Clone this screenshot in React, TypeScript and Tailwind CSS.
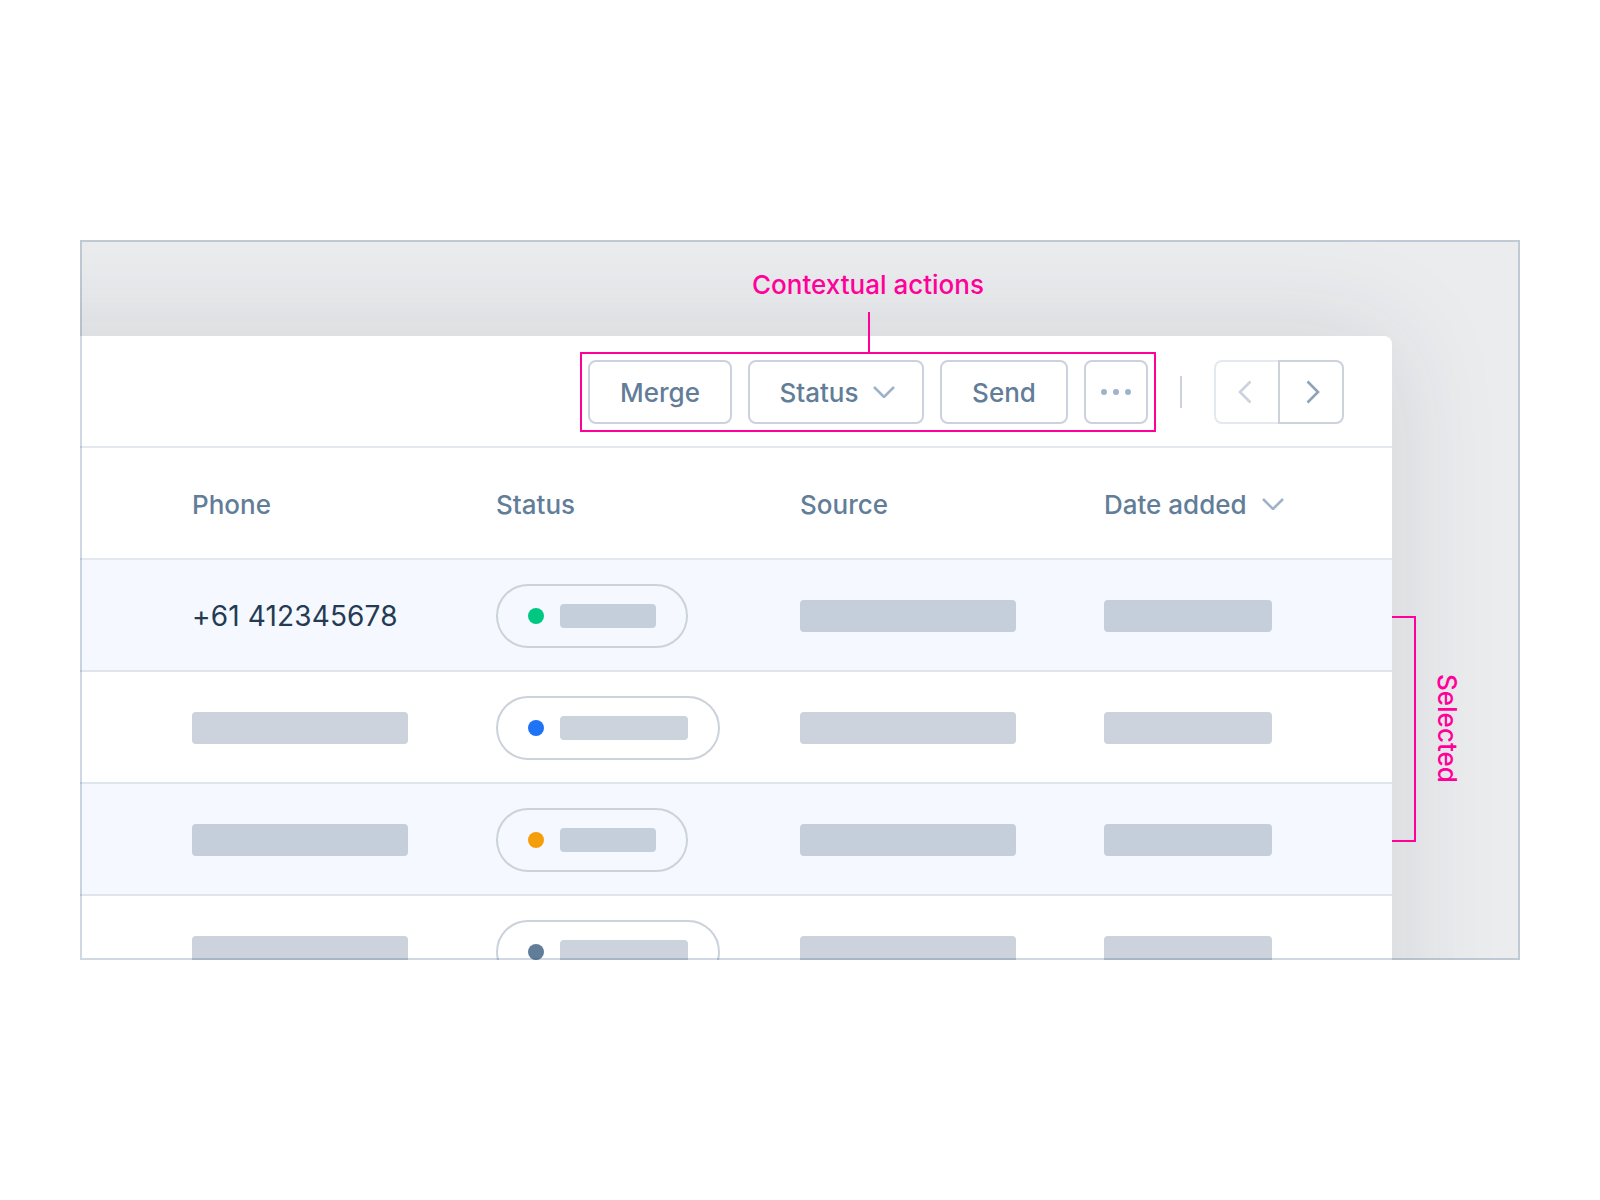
const Chevron = ({ className }: { className?: string }) => (
  <svg width="22" height="12" viewBox="0 0 22 12" fill="none" className={className}>
    <path d="M1 1l10 10L21 1" stroke="#9fb3c8" strokeWidth="2.6" />
  </svg>
);

const Button = ({ children, className }: { children: React.ReactNode; className?: string }) => (
  <button className={`h-16 flex items-center justify-center rounded-lg border-2 border-[#cbd2dc] bg-white text-[26px] font-[450] text-[#627d98] ${className}`}>
    {children}
  </button>
);

const Bar = ({ width, selected, className }: { width: string; selected?: boolean; className?: string }) => (
  <div className={`${width} rounded ${selected ? "bg-[#c5cfdb]" : "bg-[#ccd3dc]"} ${className ?? "h-8"}`} />
);

const rows = [
  { selected: true, dot: "bg-[#00c781]", phone: "+61 412345678", wide: false },
  { selected: false, dot: "bg-[#1f73f5]", wide: true },
  { selected: true, dot: "bg-[#f59e0b]", wide: false },
  { selected: false, dot: "bg-[#627d98]", wide: true },
];

export default function App() {
  return (
    <div className="min-h-[1200px] bg-white px-20 pt-60 font-['Inter',sans-serif]">
      <div className="relative h-[720px] w-[1440px] overflow-hidden bg-[#ebecee]">
        {/* card runs past the frame on the left and bottom so its shadow stays even */}
        <div className="-ml-40 mt-24 h-[900px] w-[1472px] rounded-tr-lg bg-white pl-40 shadow-[0_0_110px_rgba(30,40,60,0.13)]">
          <div className="-ml-40 flex h-28 items-center justify-end border-b-2 border-[#e4e9ef] pr-12 pt-0.5">
            <div className="flex gap-4">
              <Button className="w-36">Merge</Button>
              <Button className="w-44 gap-[14px] pl-0.5">
                Status
                <Chevron />
              </Button>
              <Button className="w-32">Send</Button>
              <Button className="w-16 gap-1.5">
                <span className="size-1.5 rounded-full bg-[#9fb3c8]" />
                <span className="size-1.5 rounded-full bg-[#9fb3c8]" />
                <span className="size-1.5 rounded-full bg-[#9fb3c8]" />
              </Button>
            </div>
            <div className="mx-8 h-8 w-0.5 bg-[#cbd2dc]" />
            <div className="flex">
              <button className="flex h-16 w-16 items-center justify-center rounded-l-lg border-2 border-r-0 border-[#e4e9ef] pr-1">
                <svg width="14" height="24" viewBox="0 0 14 24" fill="none">
                  <path d="M12.5 1.5L2 12l10.5 10.5" stroke="#cbd2dc" strokeWidth="2.6" />
                </svg>
              </button>
              <button className="flex h-16 w-[66px] items-center justify-center rounded-r-lg border-2 border-[#cbd2dc] pl-1">
                <svg width="14" height="24" viewBox="0 0 14 24" fill="none">
                  <path d="M1.5 1.5L12 12 1.5 22.5" stroke="#8ea2b8" strokeWidth="2.6" />
                </svg>
              </button>
            </div>
          </div>

          <div className="grid h-28 grid-cols-[304px_304px_304px_1fr] items-center border-b-2 border-[#e4e9ef] pl-28 pt-0.5 text-[26px] font-[450] text-[#627d98]">
            <div>Phone</div>
            <div>Status</div>
            <div>Source</div>
            <div className="flex items-center gap-[15px]">
              Date added
              <Chevron />
            </div>
          </div>

          {rows.map((row, i) => (
            <div
              key={i}
              className={`grid h-28 grid-cols-[304px_304px_304px_1fr] items-center border-b-2 border-[#dfe5ee] pl-28 pt-0.5 ${row.selected ? "bg-[#f5f9ff]" : "bg-white"}`}
            >
              {row.phone ? (
                <div className="text-[28px] tracking-[0.15px] text-[#243b53]">{row.phone}</div>
              ) : (
                <Bar width="w-[216px]" selected={row.selected} />
              )}
              <div className="flex">
                <div className="flex h-16 items-center gap-4 rounded-full border-2 border-[#cbd2dc] px-[30px]">
                  <span className={`size-4 rounded-full ${row.dot}`} />
                  <Bar width={row.wide ? "w-32" : "w-24"} selected={row.selected} className="h-6" />
                </div>
              </div>
              <Bar width="w-[216px]" selected={row.selected} />
              <Bar width="w-[168px]" selected={row.selected} />
            </div>
          ))}
        </div>

        {/* annotations */}
        <div className="absolute left-[500px] top-[112px] h-20 w-[576px] border-2 border-[#ff0099]" />
        <div className="absolute left-[788px] top-[72px] h-10 w-0.5 bg-[#ff0099]" />
        <div className="absolute left-[658px] top-[29px] w-[260px] text-center text-[26px] font-[450] leading-8 text-[#ff0099]">
          Contextual actions
        </div>
        <div className="absolute left-[1312px] top-[376px] h-[226px] w-6 border-y-2 border-r-2 border-[#ff0099]" />
        <div className="absolute left-[1351px] top-[434px] text-[26px] font-[450] leading-8 text-[#ff0099] [writing-mode:vertical-rl]">
          Selected
        </div>
        <div className="pointer-events-none absolute inset-0 border-2 border-[#144173]/20" />
      </div>
    </div>
  );
}
